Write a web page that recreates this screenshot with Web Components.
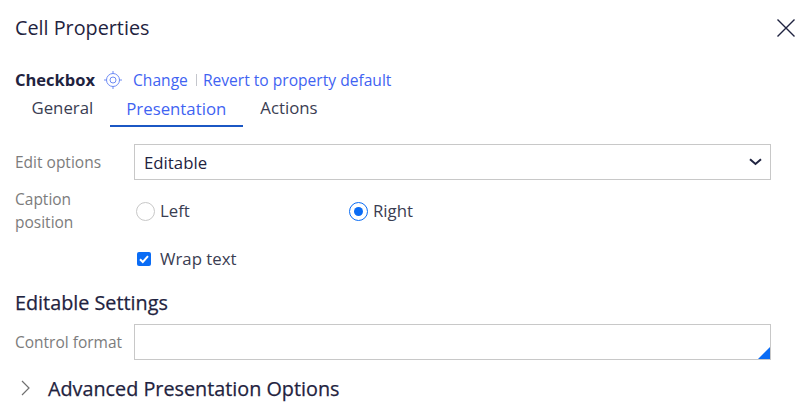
<!DOCTYPE html>
<html>
<head>
<meta charset="utf-8">
<style>
  html, body { margin: 0; background: #fff; }
  body { font-family: "Open Sans", sans-serif; color: #1f2340; width: 805px; height: 418px; overflow: hidden; }
</style>
</head>
<body>
<cell-properties></cell-properties>
<script>
class ModalHeader extends HTMLElement {
    constructor() {
        super()
        this.attachShadow({mode: 'open'})
    }

    connectedCallback() {
        this.shadowRoot.innerHTML = `
        <style>
            :host { display: flex; justify-content: space-between; align-items: center; height: 24px; padding: 16px 9px 0 15px; }
            span { font-size: 19.8px; line-height: 24px; color: #1f2340; }
            svg { display: block; margin-top: -1px; }
        </style>
        <span><slot></slot></span>
        <svg width="20" height="20" viewBox="0 0 20 20" fill="none" stroke="#1f2340" stroke-width="1.4">
            <path d="M1.5 1.5 L18.5 18.5 M18.5 1.5 L1.5 18.5"/>
        </svg>
        `
    }
}

class FieldSource extends HTMLElement {
    constructor() {
        super()
        this.attachShadow({mode: 'open'})
    }

    connectedCallback() {
        this.shadowRoot.innerHTML = `
        <style>
            :host { display: flex; align-items: center; height: 22px; padding: 29px 0 0 15px; font-size: 15.6px; line-height: 22px; color: #3f63f2; }
            b { font-weight: 700; color: #1f2340; font-size: 16.5px; }
            svg { margin: 0 11px 0 9px; display: block; }
            i { width: 1px; height: 12px; background: #c4c6cc; margin: 0 6px 0 8px; }
        </style>
        <b>Checkbox</b>
        <svg width="18" height="18" viewBox="0 0 18 18" fill="none" stroke="#6f8cf5" stroke-width="1">
            <circle cx="9" cy="9" r="6.5"/>
            <circle cx="9" cy="9" r="3"/>
            <path d="M9 0 V3 M9 15 V18 M0 9 H3 M15 9 H18"/>
        </svg>
        <span>Change</span><i></i><span>Revert to property default</span>
        `
    }
}

class TabBar extends HTMLElement {
    constructor() {
        super()
        this.attachShadow({mode: 'open'})
    }

    connectedCallback() {
        const active = this.getAttribute('active')
        const tabs = this.getAttribute('tabs').split(',')
        const items = tabs.map(t => `<div class="${t === active ? 'tab on' : 'tab'}">${t}</div>`).join('')
        this.shadowRoot.innerHTML = `
        <style>
            :host { display: flex; height: 29px; padding: 7px 0 0 15px; font-size: 16.8px; line-height: 22px; color: #3a3d52; }
            .tab { padding: 0 16.5px; height: 24px; margin-top: -1px; }
            .tab.on { color: #3f63f2; border-bottom: 2px solid #1b57c4; height: 27px; margin: 0 1px 0 0; }
        </style>
        ${items}
        `
    }
}

class FormRow extends HTMLElement {
    constructor() {
        super()
        this.attachShadow({mode: 'open'})
    }

    connectedCallback() {
        this.shadowRoot.innerHTML = `
        <style>
            :host { display: grid; grid-template-columns: 119px 637px; align-items: center; padding-left: 15px; }
            .label { font-size: 15.5px; line-height: 23px; color: #7c7c7c; }
        </style>
        <div class="label"><slot name="label"></slot></div>
        <div><slot></slot></div>
        `
    }
}

class SelectBox extends HTMLElement {
    constructor() {
        super()
        this.attachShadow({mode: 'open'})
    }

    connectedCallback() {
        this.shadowRoot.innerHTML = `
        <style>
            :host { display: flex; justify-content: space-between; align-items: center; box-sizing: border-box; height: 36px; border: 1px solid #c8c8c8; padding: 0 8px 0 9px; font-size: 16.8px; color: #1f2340; }
            svg { display: block; }
        </style>
        <span><slot></slot></span>
        <svg width="13" height="8" viewBox="0 0 13 8" fill="none" stroke="#1f2340" stroke-width="2">
            <path d="M1 1.2 L6.5 6 L12 1.2"/>
        </svg>
        `
    }
}

class TextBox extends HTMLElement {
    constructor() {
        super()
        this.attachShadow({mode: 'open'})
    }

    connectedCallback() {
        this.shadowRoot.innerHTML = `
        <style>
            :host { display: block; position: relative; box-sizing: border-box; height: 36px; border: 1px solid #c8c8c8; }
            /* resize corner sits over the box */
            svg { position: absolute; right: 0; bottom: 0; display: block; }
        </style>
        <svg width="12" height="12" viewBox="0 0 12 12"><path d="M12 0 V12 H0 Z" fill="#0a6cf5"/></svg>
        `
    }
}

class RadioOption extends HTMLElement {
    constructor() {
        super()
        this.attachShadow({mode: 'open'})
    }

    connectedCallback() {
        const on = this.hasAttribute('checked')
        this.shadowRoot.innerHTML = `
        <style>
            :host { display: inline-flex; align-items: center; font-size: 16.8px; line-height: 22px; color: #3a3d52; }
            .dot { box-sizing: border-box; width: 19px; height: 19px; border-radius: 50%; border: 1px solid ${on ? '#0a6cf5' : '#c8c8c8'}; margin-right: 5px; display: flex; align-items: center; justify-content: center; }
            .dot::after { content: ""; width: 9px; height: 9px; border-radius: 50%; background: ${on ? '#0a6cf5' : 'transparent'}; }
        </style>
        <span class="dot"></span><slot></slot>
        `
    }
}

class CheckOption extends HTMLElement {
    constructor() {
        super()
        this.attachShadow({mode: 'open'})
    }

    connectedCallback() {
        this.shadowRoot.innerHTML = `
        <style>
            :host { display: inline-flex; align-items: center; font-size: 16.8px; line-height: 22px; color: #3a3d52; }
            svg { display: block; margin-right: 9px; }
        </style>
        <svg width="14" height="14" viewBox="0 0 14 14">
            <rect width="14" height="14" rx="2" fill="#0a6cf5"/>
            <path d="M3 7.2 L5.8 10 L11 4.2" fill="none" stroke="#fff" stroke-width="2"/>
        </svg>
        <slot></slot>
        `
    }
}

class CellProperties extends HTMLElement {
    constructor() {
        super()
        this.attachShadow({mode: 'open'})
    }

    connectedCallback() {
        this.shadowRoot.innerHTML = `
        <style>
            :host { display: block; }
            .first { padding-top: 17px; }
            .radios { display: grid; grid-template-columns: 213px auto; padding-left: 2px; }
            .caption { padding-top: 8px; }
            .wrap { padding: 14px 0 0 3px; }
            h2 { margin: 0; padding: 20px 0 0 15px; font-size: 19.8px; line-height: 24px; font-weight: 400; -webkit-text-stroke: 0.25px #1f2340; color: #1f2340; }
            .format { padding-top: 9px; }
            .advanced { display: flex; align-items: center; height: 24px; padding: 16px 0 0 21px; font-size: 19.8px; font-weight: 400; color: #1f2340; }
            .advanced span { -webkit-text-stroke: 0.25px #1f2340; }
            .advanced svg { display: block; margin-right: 18px; }
        </style>
        <modal-header>Cell Properties</modal-header>
        <field-source></field-source>
        <tab-bar tabs="General,Presentation,Actions" active="Presentation"></tab-bar>
        <form-row class="first"><span slot="label">Edit options</span><select-box>Editable</select-box></form-row>
        <form-row class="caption">
            <span slot="label">Caption<br>position</span>
            <div class="radios"><radio-option>Left</radio-option><radio-option checked>Right</radio-option></div>
        </form-row>
        <form-row class="wrap-row"><div class="wrap"><check-option>Wrap text</check-option></div></form-row>
        <h2>Editable Settings</h2>
        <form-row class="format"><span slot="label">Control format</span><text-box></text-box></form-row>
        <div class="advanced">
            <svg width="9" height="16" viewBox="0 0 9 16" fill="none" stroke="#707070" stroke-width="1.2"><path d="M1 1 L8 8 L1 15"/></svg>
            <span>Advanced Presentation Options</span>
        </div>
        `
    }
}

customElements.define('modal-header', ModalHeader)
customElements.define('field-source', FieldSource)
customElements.define('tab-bar', TabBar)
customElements.define('form-row', FormRow)
customElements.define('select-box', SelectBox)
customElements.define('text-box', TextBox)
customElements.define('radio-option', RadioOption)
customElements.define('check-option', CheckOption)
customElements.define('cell-properties', CellProperties)
</script>
</body>
</html>
